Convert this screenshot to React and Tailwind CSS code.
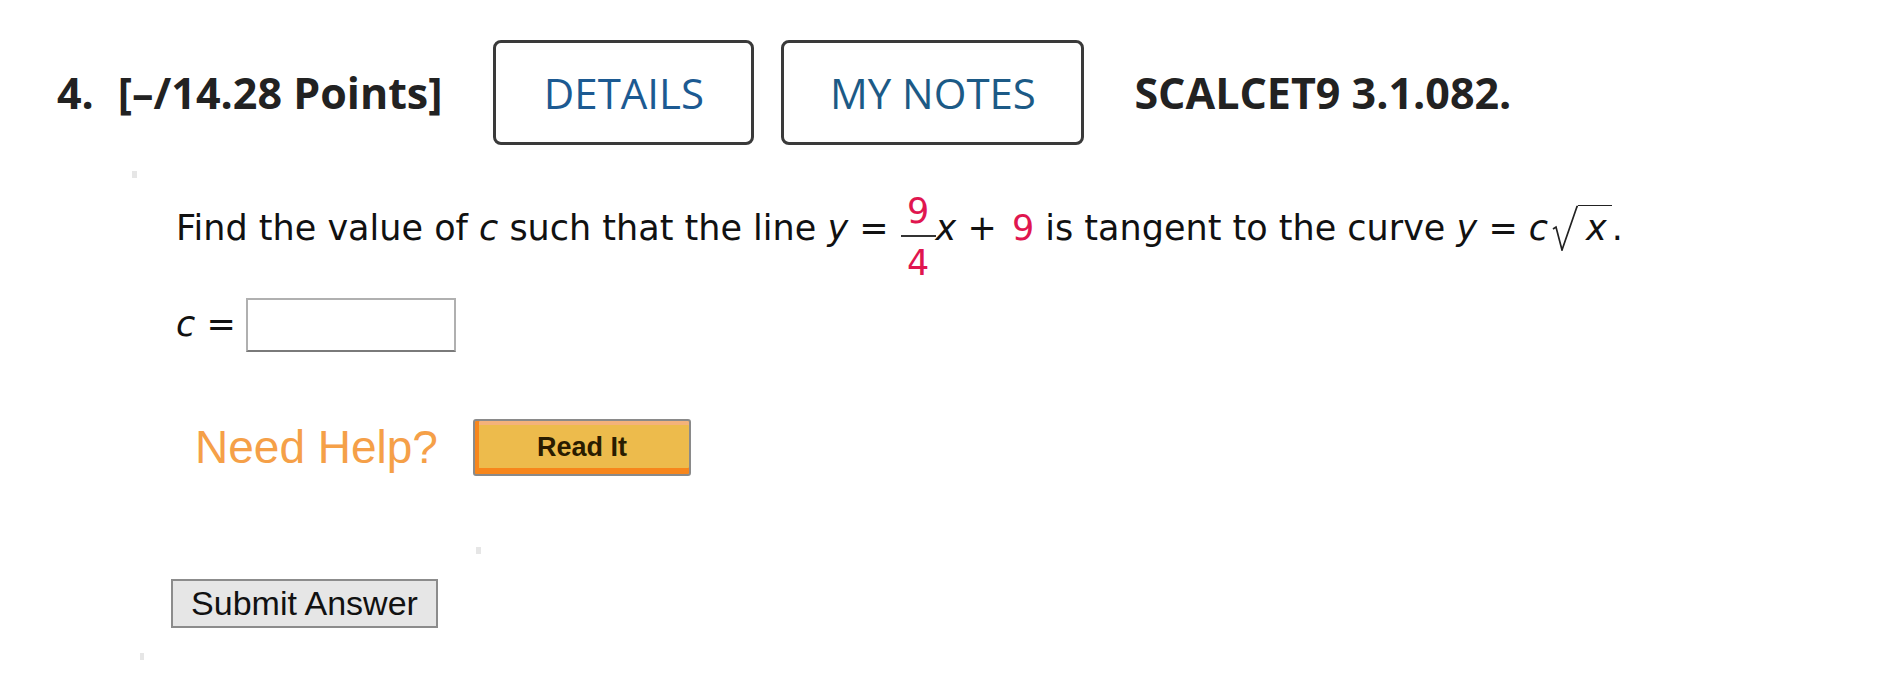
export default function App() {
  return (
    <div className="min-h-screen w-full bg-white text-[#1a1a1a]">
      {/* header row */}
      <div className="flex items-center pt-[40px] pl-[57px] font-['Open_Sans',sans-serif]">
        <div className="flex items-center text-[43px] font-bold text-[#222] leading-none">
          <span>4.</span>
          <span className="ml-[24px]">[–/14.28 Points]</span>
        </div>
        <button
          type="button"
          className="ml-[51px] h-[105px] w-[261px] rounded-[8px] border-[3px] border-[#3a3a3a] bg-white text-[42px] font-medium leading-none text-[#1c5a92]"
        >
          DETAILS
        </button>
        <button
          type="button"
          className="ml-[27px] h-[105px] w-[303px] rounded-[8px] border-[3px] border-[#3a3a3a] bg-white text-[42px] font-medium leading-none text-[#1c5a86]"
        >
          MY NOTES
        </button>
        <span className="ml-[50px] text-[43px] font-bold leading-none text-[#222]">
          SCALCET9 3.1.082.
        </span>
      </div>

      <div className="ml-[132px] mt-[26px] h-[7px] w-[5px] bg-[#e6e6e6]" />

      {/* question */}
      <div className="pl-[176px] font-['DejaVu_Sans',Verdana,sans-serif] text-[35px] text-[#111]">
        <p className="mt-[16px] leading-[35px] whitespace-nowrap">
          Find the value of <i>c</i> such that the line <i>y</i> =
          <span className="ml-[12px] inline-flex flex-col items-center align-[17px] leading-[35px] text-[#e0164f]">
            <span>9</span>
            <span className="mt-[6px] h-[1.5px] w-[35px] bg-[#333]" />
            <span className="mt-[9px]">4</span>
          </span>
          <i>x</i> + <span className="ml-[4px] text-[#e0164f]">9</span> is tangent to the curve{" "}
          <i>y</i> = <i>c</i>
          <svg
            width="26"
            height="46"
            viewBox="0 0 26 46"
            className="ml-[4px] inline-block align-[-11px]"
          >
            <path d="M1 24 L4 22 L10 45 L25 1.5 L26 1.5" fill="none" stroke="#222" strokeWidth="1.7" />
          </svg>
          <span className="inline-block border-t-[1.7px] border-[#222] pl-[8px] pr-[5px] leading-[44px]">
            <i>x</i>
          </span>
          .
        </p>

        <div className="mt-[17px] flex items-center gap-[10px]">
          <span>
            <i>c</i> =
          </span>
          <input
            type="text"
            className="h-[54px] w-[210px] border-2 border-[#b0b0b0] border-b-[#7a7a7a] bg-white outline-none"
          />
        </div>
      </div>

      {/* help row */}
      <div className="mt-[67px] flex items-center pl-[195px] font-['Liberation_Sans',Arial,sans-serif]">
        <span className="text-[46px] leading-none text-[#f5a048]">Need Help?</span>
        <button
          type="button"
          className="ml-[35px] h-[57px] w-[218px] rounded-[3px] border-2 border-[#8a8a8a] bg-[#edbb4c] text-[27px] font-bold leading-none text-[#2a1c00] shadow-[inset_0_-6px_0_#f7861c,inset_4px_0_0_#f7861c,inset_0_4px_0_#f4b27a]"
        >
          Read It
        </button>
      </div>

      <div className="ml-[476px] mt-[71px] h-[7px] w-[5px] bg-[#e6e6e6]" />

      <div className="mt-[25px] pl-[171px] font-['Liberation_Sans',Arial,sans-serif]">
        <button
          type="button"
          className="h-[49px] w-[267px] border-2 border-[#8c8c8c] bg-[#e6e6e6] text-[34px] leading-none text-[#111]"
        >
          Submit Answer
        </button>
      </div>

      <div className="ml-[140px] mt-[25px] h-[7px] w-[4px] bg-[#e6e6e6]" />
    </div>
  );
}
